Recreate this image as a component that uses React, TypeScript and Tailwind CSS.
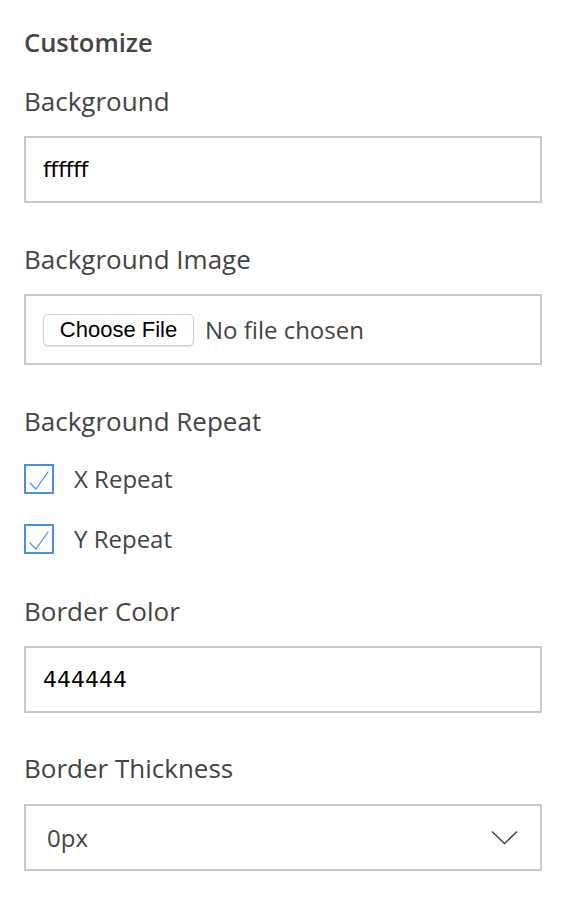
import React from "react";

const label = "block text-[26px] leading-[32px] text-[#444444] font-['Open_Sans',sans-serif]";
const boxInput =
  "block w-full h-[67px] border-2 border-[#c8c8cc] bg-white px-[17px] text-[22px] text-black font-['DejaVu_Sans',sans-serif] outline-none";

function Check() {
  return (
    <span className="flex h-[30px] w-[30px] items-center justify-center border-2 border-[#4a8fdb] bg-white">
      <svg width="26" height="26" viewBox="0 0 26 26" fill="none">
        <path d="M4 17 L10 23 L22 6" stroke="#4a8fdb" strokeWidth="1.2" strokeLinecap="round" strokeLinejoin="round" />
      </svg>
    </span>
  );
}

export default function App() {
  return (
    <div className="min-h-[898px] w-[564px] bg-white pl-[24px] pr-[22px] pt-[26px] font-['Open_Sans',sans-serif]">
      <div className="text-[25.5px] leading-[32px] font-semibold text-[#444444]">Customize</div>

      <label className={label + " mt-[27px]"}>Background</label>
      <input className={boxInput + " mt-[19px]"} defaultValue="ffffff" readOnly />

      <label className={label + " mt-[40px]"}>Background Image</label>
      <div className="mt-[19px] flex h-[71px] items-center border-2 border-[#c8c8cc] bg-white pl-[17px]">
        <button className="h-[32px] w-[151px] rounded-[5px] border border-[#d0d0d0] bg-white text-[22px] leading-[24px] text-black shadow-[0_1px_1px_rgba(0,0,0,0.12)] font-['Liberation_Sans',sans-serif]">
          Choose File
        </button>
        <span className="ml-[11px] text-[24px] leading-[32px] text-[#444444]">No file chosen</span>
      </div>

      <label className={label + " mt-[40px]"}>Background Repeat</label>
      <div className="mt-[27px] flex flex-col gap-[30px]">
        <div className="flex h-[30px] items-center gap-[20px]">
          <Check />
          <span className="text-[24px] leading-[32px] text-[#444444]">X Repeat</span>
        </div>
        <div className="flex h-[30px] items-center gap-[20px]">
          <Check />
          <span className="text-[24px] leading-[32px] text-[#444444]">Y Repeat</span>
        </div>
      </div>

      <label className={label + " mt-[41px]"}>Border Color</label>
      <input className={boxInput + " mt-[19px]"} defaultValue="444444" readOnly />

      <label className={label + " mt-[39px]"}>Border Thickness</label>
      <div className="mt-[20px] flex h-[67px] items-center justify-between border-2 border-[#c8c8cc] bg-white pl-[21px] pr-[22px]">
        <span className="text-[24px] leading-[32px] text-[#444444]">0px</span>
        <svg width="27" height="15" viewBox="0 0 27 15" fill="none">
          <path d="M1 1.5 L13.5 13.5 L26 1.5" stroke="#444444" strokeWidth="1.5" />
        </svg>
      </div>
    </div>
  );
}
